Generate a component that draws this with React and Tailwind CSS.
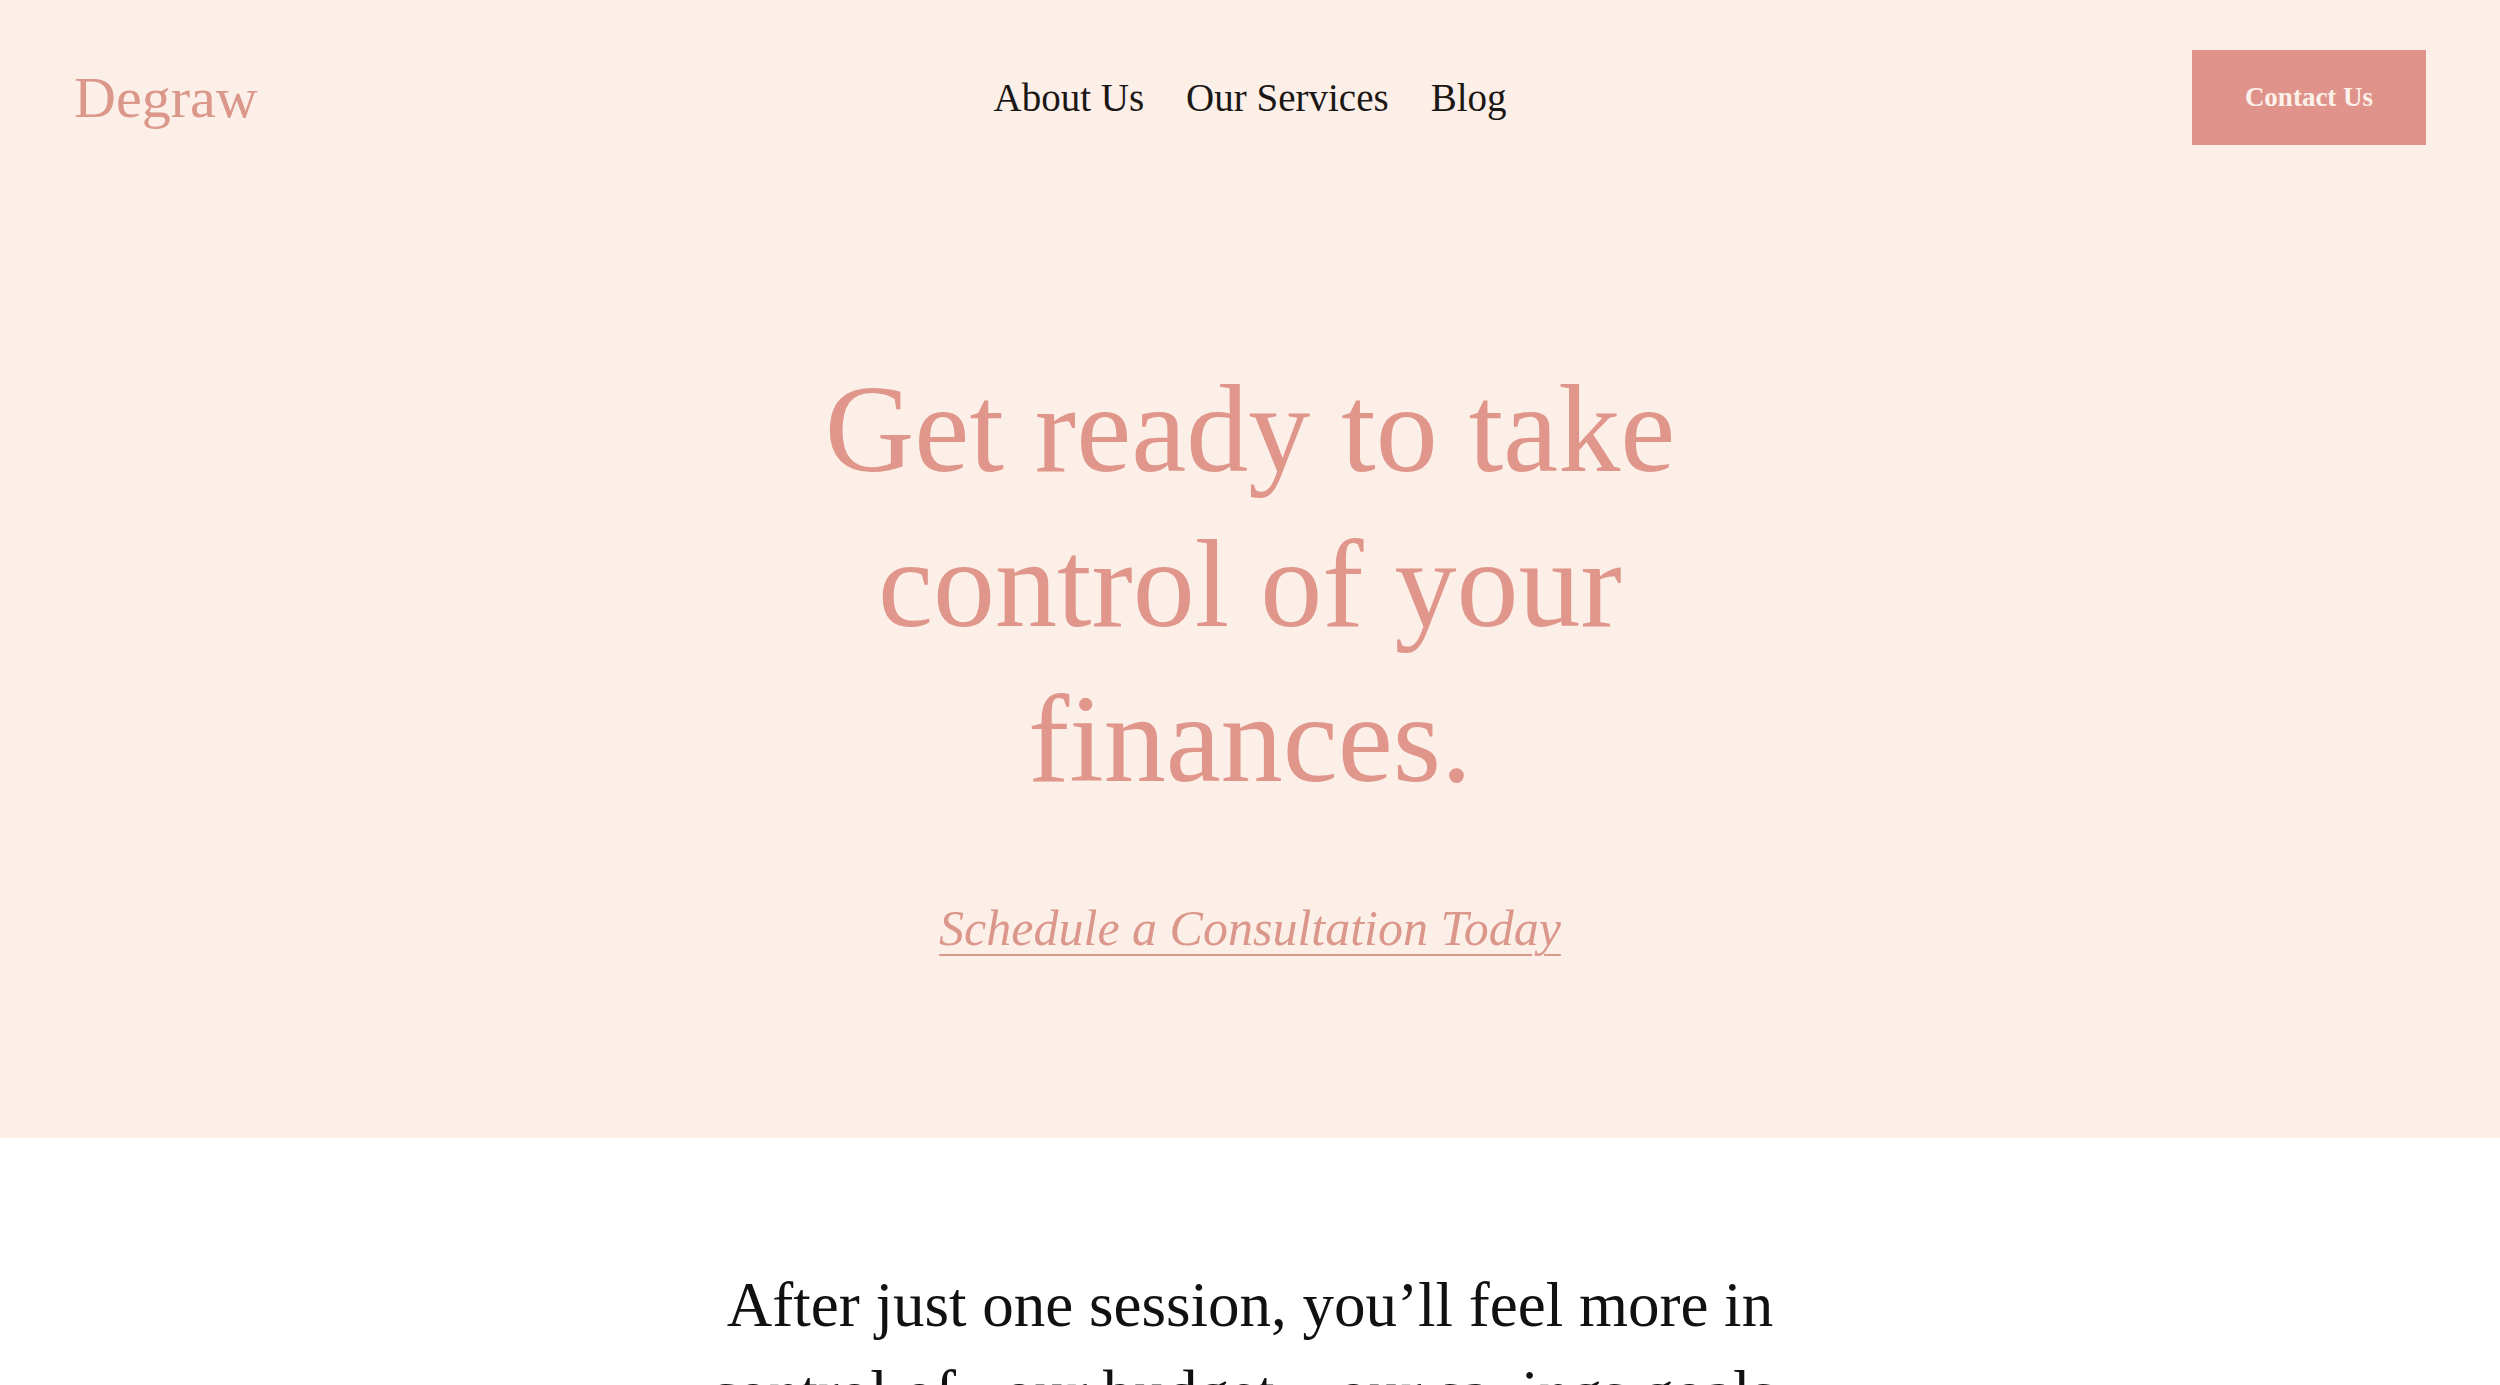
export default function App() {
  const serif = { fontFamily: "'Liberation Serif', 'Times New Roman', serif" }
  return (
    <div className="min-h-screen bg-white" style={serif}>
      {/* Hero */}
      <section className="bg-[#fbefe8] pb-[180px]">
        <header className="grid grid-cols-[1fr_auto_1fr] items-center px-[74px] py-[50px]">
          <a className="justify-self-start text-[58px] leading-none text-[#dc978b]">Degraw</a>
          <nav className="flex items-center gap-[42px] text-[39px] leading-none text-[#1b1715]">
            <a>About Us</a>
            <a>Our Services</a>
            <a>Blog</a>
          </nav>
          <a className="justify-self-end flex h-[95px] w-[234px] items-center justify-center bg-[#e0938a] text-[27px] font-semibold text-[#fcf1ea]">
            Contact Us
          </a>
        </header>

        <div className="flex flex-col items-center pt-[157px] text-center">
          <h1 className="text-[124px] leading-[155px] text-[#e0968a]">
            Get ready to take
            <br />
            control of your
            <br />
            finances.
          </h1>
          <a className="mt-[81px] text-[50px] leading-[1.2] italic text-[#dc978b] underline decoration-[2px] underline-offset-[9px]">
            Schedule a Consultation Today
          </a>
        </div>
      </section>

      {/* Intro */}
      <section className="flex justify-center pt-[123px] pb-[120px]">
        <p className="max-w-[1100px] text-center text-[63px] leading-[88px] text-[#111]">
          After just one session, you’ll feel more in control of your budget, your savings goals, and the
          future you want to build.
        </p>
      </section>
    </div>
  )
}
